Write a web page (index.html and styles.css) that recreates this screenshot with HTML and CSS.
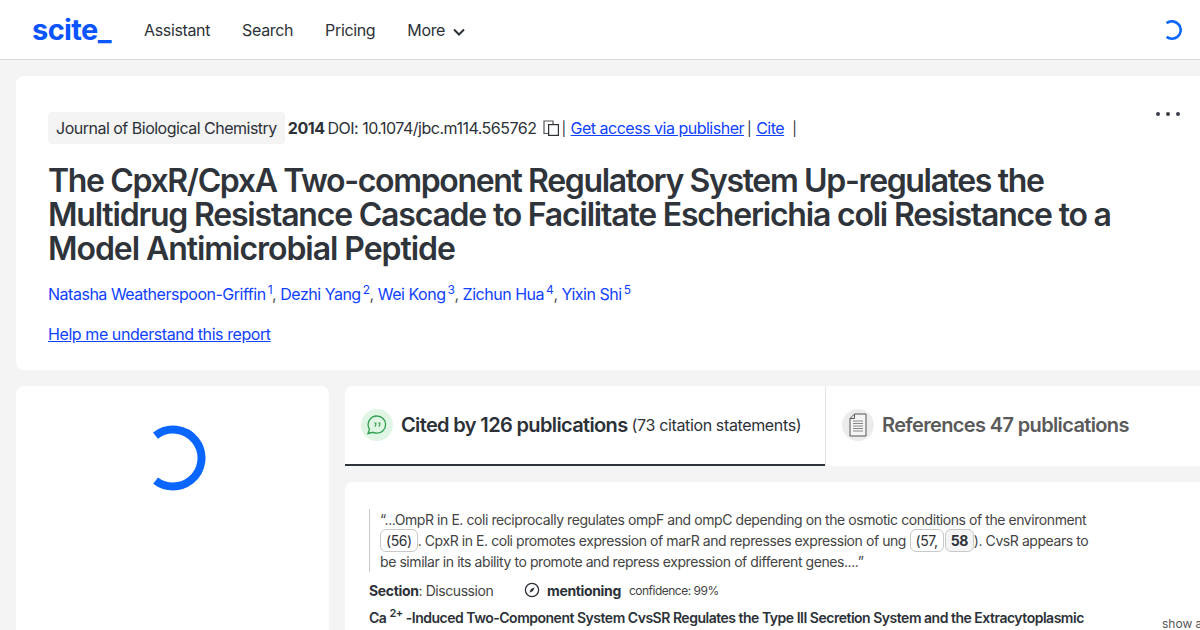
FILE: index.html
```html
<!DOCTYPE html>
<html lang="en">
<head>
  <meta charset="UTF-8" />
  <title>The CpxR/CpxA Two-component Regulatory System | scite</title>
  <link rel="stylesheet" href="styles.css">
</head>
<body>
  <header class="topbar">
    <a class="logo" href="#">scite_</a>
    <nav class="nav">
      <a href="#">Assistant</a>
      <a href="#">Search</a>
      <a href="#">Pricing</a>
      <a href="#" class="more">More
        <svg width="12" height="8" viewBox="0 0 12 8"><path d="M1 1.500l5 5 5-5" fill="none" stroke="#2c3138" stroke-width="2"/></svg>
      </a>
    </nav>
    <svg class="spin-small" width="20" height="20" viewBox="0 0 20 20"><circle cx="10" cy="10" r="8.700" pathLength="100" stroke-dasharray="71 29" transform="rotate(-128 10 10)"/></svg>
  </header>

  <div class="page">
    <section class="report card">
      <div class="meta">
        <span class="journal">Journal of Biological Chemistry</span>
        <b class="year">2014</b>
        <span class="doi">DOI: 10.1074/jbc.m114.565762</span>
        <svg class="copy" width="16" height="16" viewBox="0 0 16 16"><path d="M5 13.500H1V1h9v3" fill="none" stroke="#555" stroke-width="1.200"/><rect x="5.600" y="4.600" width="9.800" height="10.800" fill="#fff" stroke="#2c3138" stroke-width="1.200"/></svg>
        <span class="sep">|</span>
        <a href="#">Get access via publisher</a>
        <span class="sep mid">|</span>
        <a href="#">Cite</a>
        <span class="sep last">|</span>
      </div>
      <div class="dots"><i></i><i></i><i></i></div>
      <h1>
        <span class="line-1">The CpxR/CpxA Two-component Regulatory System Up-regulates the</span>
        <span class="line-2">Multidrug Resistance Cascade to Facilitate Escherichia coli Resistance to a</span>
        <span class="line-3">Model Antimicrobial Peptide</span>
      </h1>
      <p class="authors">
        <span>Natasha Weatherspoon-Griffin<sup>1</sup></span>, <span>Dezhi Yang<sup>2</sup></span>, <span>Wei Kong<sup>3</sup></span>, <span>Zichun Hua<sup>4</sup></span>, <span>Yixin Shi<sup>5</sup></span>
      </p>
      <a class="help" href="#">Help me understand this report</a>
    </section>

    <div class="columns">
      <aside class="side card">
        <svg width="66" height="66" viewBox="0 0 66 66"><circle cx="33" cy="33" r="28.500" pathLength="100" stroke-dasharray="71 29" transform="rotate(-128 33 33)"/></svg>
      </aside>

      <main class="results">
        <div class="tabs">
          <div class="tab active">
            <span class="tab-icon green">
              <svg width="22" height="22" viewBox="0 0 22 22"><path d="M11 2a8.600 8.600 0 0 1 0 17.200c-1.500 0-2.800-.3-4-.9L2 19.500l1.500-4.300A8.600 8.600 0 0 1 11 2z" fill="none" stroke="#2f9e4f" stroke-width="1.300"/><path d="M8.300 9h1.500v1.500c0 1-.4 1.600-1.200 2M12.300 9h1.500v1.500c0 1-.4 1.600-1.200 2" fill="none" stroke="#2f9e4f" stroke-width="1.200"/></svg>
            </span>
            <span class="tab-title">Cited by 126 publications</span>
            <span class="tab-note">(73 citation statements)</span>
          </div>
          <div class="tab">
            <span class="tab-icon grey">
              <svg width="18" height="24" viewBox="0 0 18 24"><path d="M5.500 1H17v22H1V5.500z" fill="#f4f4f4" stroke="#555" stroke-width="1"/><path d="M5.500 1v4.500H1" fill="none" stroke="#555"/><path d="M4 8h10M4 10.500h10M4 13h10M4 15.500h10M4 18h10" stroke="#888" stroke-width="1.200"/></svg>
            </span>
            <span class="tab-title muted">References 47 publications</span>
          </div>
        </div>

        <article class="cite card">
          <blockquote>“...OmpR in E. coli reciprocally regulates ompF and ompC depending on the osmotic conditions of the environment <span class="ref">(56)</span>. CpxR in E. coli promotes expression of marR and represses expression of ung <span class="ref">(57,</span><span class="ref current">58</span>). CvsR appears to be similar in its ability to promote and repress expression of different genes....”</blockquote>
          <div class="cite-meta">
            <span class="section"><b>Section</b>: Discussion</span>
            <svg width="16" height="16" viewBox="0 0 16 16"><circle cx="8" cy="8" r="6.600" fill="none" stroke="#2c3138" stroke-width="1.300"/><path d="M5.300 10.700l1.700-3.700 3.700-1.700-1.700 3.700z" fill="#2c3138"/></svg>
            <b class="kind">mentioning</b>
            <span class="conf">confidence: 99%</span>
          </div>
          <div class="cite-title">Ca <sup>2+</sup> -Induced Two-Component System CvsSR Regulates the Type III Secretion System and the Extracytoplasmic</div>
          <span class="show-all">show all</span>
        </article>
      </main>
    </div>
  </div>
</body>
</html>
```

FILE: styles.css
```css
html, body {
  height: 630px;
  overflow: hidden;
}
body {
  margin: 0;
  background: #f4f4f4;
  color: #2c3138;
  font-family: Inter, "Noto Sans", sans-serif;
}
a {
  color: #0f42ff;
}
.topbar {
  display: flex;
  align-items: center;
  height: 59px;
  padding: 0 18px 0 32px;
  background: #fff;
  border-bottom: 1px solid #d9d9d9;
}
.logo {
  font-size: 29px;
  font-weight: 700;
  letter-spacing: -0.6px;
  color: #0a55ff;
  text-decoration: none;
  width: 112px;
}
.nav {
  display: flex;
  align-items: center;
  gap: 32px;
  flex: 1;
}
.nav a {
  font-size: 16px;
  letter-spacing: -0.35px;
  color: #2c3138;
  text-decoration: none;
}
.more svg {
  margin-left: 4px;
}
.spin-small circle {
  fill: none;
  stroke: #0a66ff;
  stroke-width: 2.6;
}
.page {
  width: 1300px;
  padding: 16px;
}
.card {
  background: #fff;
  border-radius: 8px;
}
.report {
  position: relative;
  height: 294px;
  box-sizing: border-box;
  padding: 36px 32px 0;
  width: 1268px;
}
.meta {
  display: flex;
  align-items: center;
  height: 32px;
  font-size: 16px;
  letter-spacing: -0.5px;
  white-space: nowrap;
}
.journal {
  background: #f4f4f4;
  border-radius: 4px;
  padding: 0 8px;
  line-height: 32px;
  margin-right: 3px;
}
.year {
  margin-right: 3px;
}
.copy {
  margin: 0 2px 0 7px;
}
.sep {
  font-size: 14px;
  margin-right: 5px;
}
.sep.mid {
  margin: 0 5px 0 3px;
}
.sep.last {
  margin: 0 0 0 8px;
}
.dots {
  position: absolute;
  left: 1140px;
  top: 36px;
  display: flex;
  gap: 6px;
}
.dots i {
  width: 4px;
  height: 4px;
  border-radius: 50%;
  background: #3a3f47;
}
h1 {
  margin: 20px 0 0;
  font-size: 32px;
  line-height: 34px;
  font-weight: 600;
  color: #2f343b;
}
h1 span {
  display: block;
  white-space: nowrap;
}
.line-1 {
  letter-spacing: -1.35px;
}
.line-2 {
  letter-spacing: -1.2px;
}
.line-3 {
  letter-spacing: -1.05px;
}
.authors {
  margin: 16px 0 0;
  font-size: 16px;
  line-height: 24px;
  letter-spacing: -0.48px;
  color: #555;
}
.authors span {
  color: #0f42ff;
}
.authors sup {
  font-size: 12px;
  line-height: 0;
  margin-left: 2px;
}
.help {
  display: inline-block;
  margin-top: 16px;
  font-size: 16px;
  line-height: 24px;
  letter-spacing: -0.42px;
}
.columns {
  display: grid;
  grid-template-columns: 313px 1fr;
  gap: 16px;
  margin-top: 16px;
}
.side {
  display: flex;
  justify-content: center;
  height: 400px;
  padding-top: 39px;
  box-sizing: border-box;
}
.side circle {
  fill: none;
  stroke: #0a66ff;
  stroke-width: 8;
}
.tabs {
  display: flex;
  height: 80px;
  background: #fff;
  border-radius: 8px 0 0 0;
}
.tab {
  display: flex;
  align-items: center;
  box-sizing: border-box;
  padding: 0 0 2px 16px;
  width: 481px;
  border-left: 1px solid #e6e6e6;
}
.tab.active {
  width: 480px;
  padding-bottom: 0;
  border-left: 0;
  border-bottom: 2px solid #2f343b;
}
.tab-icon {
  display: flex;
  align-items: center;
  justify-content: center;
  width: 32px;
  height: 32px;
  border-radius: 50%;
  margin-right: 8px;
}
.green {
  background: #e0f5e3;
}
.grey {
  background: #ececec;
}
.tab-title {
  font-size: 20px;
  font-weight: 600;
  letter-spacing: -0.64px;
}
.tab-title.muted {
  color: #5a5a5a;
}
.tab-note {
  font-size: 16px;
  letter-spacing: -0.36px;
  margin-left: 4px;
}
.cite {
  position: relative;
  margin-top: 16px;
  height: 200px;
  box-sizing: border-box;
  padding: 27px 24px 0;
}
blockquote {
  margin: 0;
  width: 720px;
  padding-left: 10px;
  border-left: 1px solid #c8c8c8;
  font-size: 14px;
  line-height: 21px;
  letter-spacing: -0.43px;
  color: #444;
}
.ref {
  display: inline-block;
  height: 23px;
  margin: -1px 0;
  line-height: 21px;
  box-sizing: border-box;
  padding: 0 5px;
  border: 1px solid #c9c9c9;
  border-radius: 6px;
  color: #2c3138;
}
.ref.current {
  background: #f4f4f4;
  font-weight: 700;
  margin-left: 1px;
}
.cite-meta {
  display: flex;
  align-items: center;
  margin-top: 8px;
  height: 20px;
  font-size: 14px;
  letter-spacing: -0.43px;
  color: #444;
}
.cite-meta b {
  color: #2c3138;
  letter-spacing: -0.35px;
}
.section {
  width: 155px;
}
.kind {
  margin-left: 7px;
}
.conf {
  font-size: 12px;
  margin-left: 8px;
  letter-spacing: -0.5px;
}
.cite-title {
  margin-top: 8px;
  font-size: 14px;
  line-height: 20px;
  font-weight: 600;
  letter-spacing: -0.49px;
}
.cite-title sup {
  font-size: 11px;
  line-height: 0;
}
.show-all {
  position: absolute;
  left: 817px;
  top: 134px;
  font-size: 12px;
  color: #555;
}
```
